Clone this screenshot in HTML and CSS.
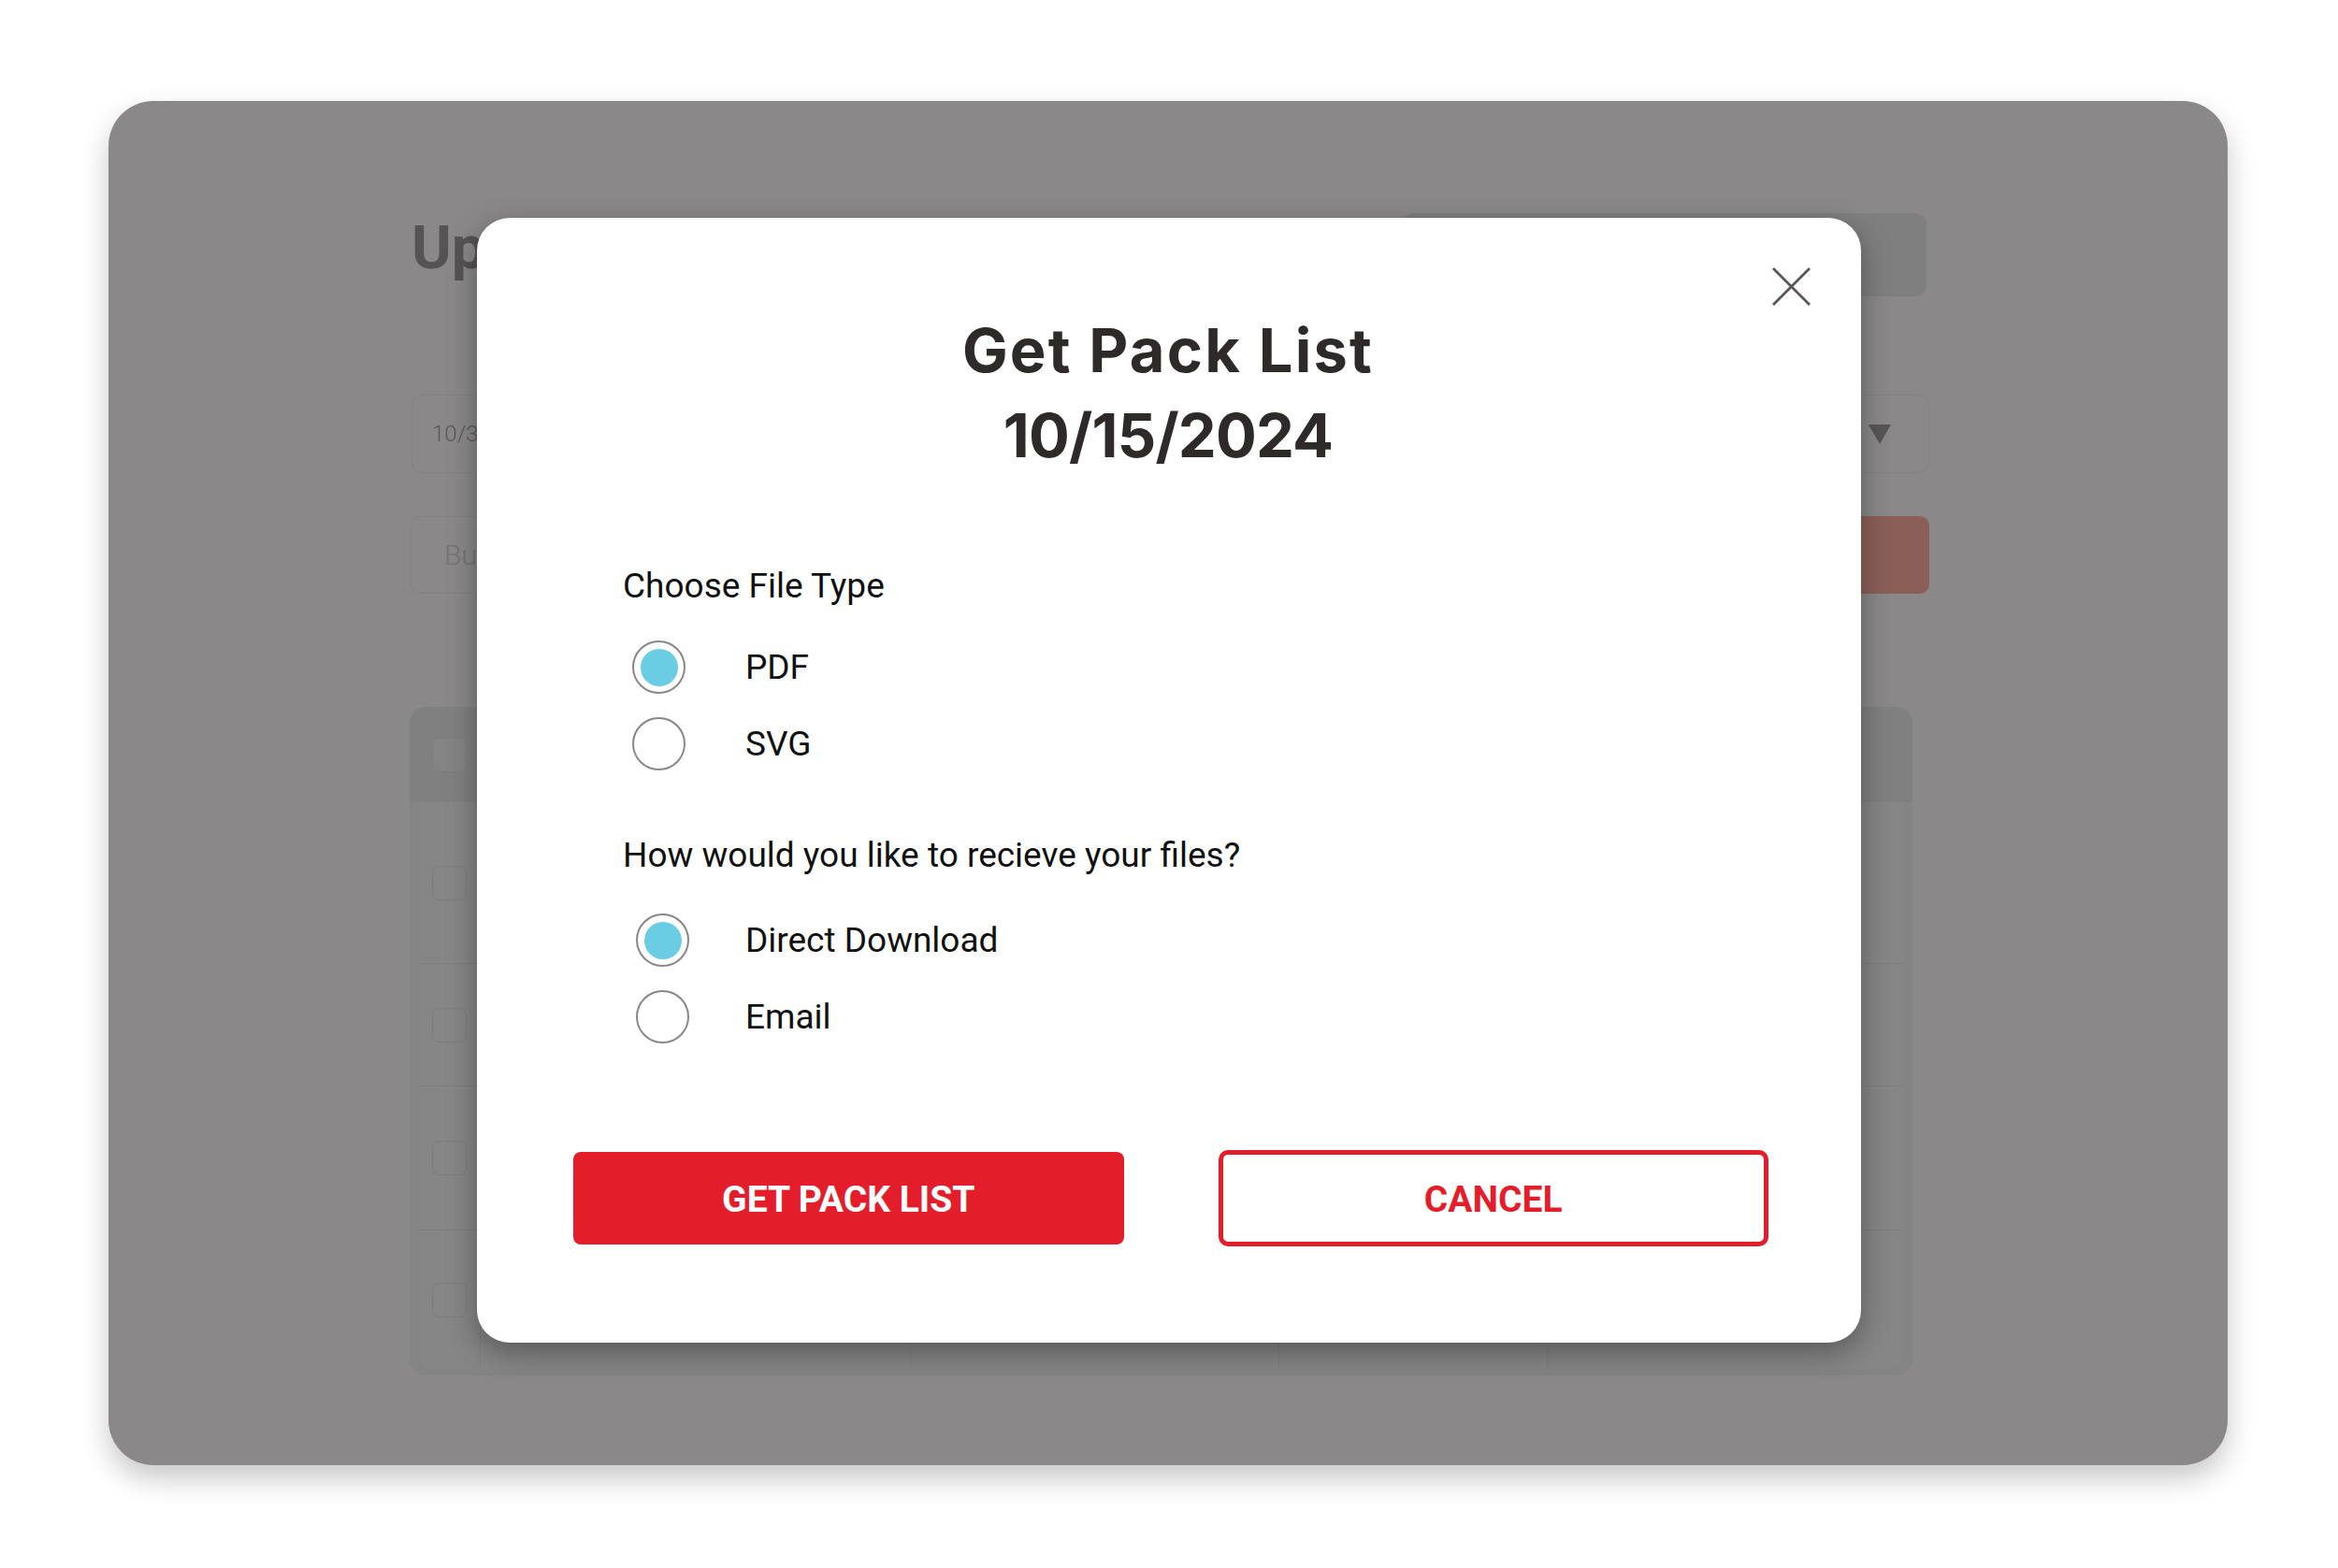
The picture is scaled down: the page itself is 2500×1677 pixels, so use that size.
FILE: index.html
```html
<!DOCTYPE html>
<html lang="en">
<head>
    <meta charset="UTF-8">
    <meta name="viewport" content="width=device-width, initial-scale=1.0">
    <title>Get Pack List</title>
    <link rel="stylesheet" href="styles.css">
</head>
<body>
    <div class="screen">
        <div class="page">
            <div class="page-header">
                <h1 class="page-title">Upcoming Pack Lists</h1>
                <div class="header-btn"></div>
            </div>

            <div class="select">
                <span>10/31/2024</span>
                <span class="caret"></span>
            </div>

            <div class="filter-row">
                <div class="search">Business Unit</div>
                <div class="search-btn"></div>
            </div>

            <div class="table">
                <div class="table-head">
                    <span class="checkbox"></span>
                </div>
                <div class="table-body">
                    <div class="row r1">
                        <div class="cell c-check"><span class="checkbox"></span></div>
                        <div class="cell c-a"></div>
                        <div class="cell c-b"></div>
                        <div class="cell c-c"></div>
                        <div class="cell c-d"></div>
                    </div>
                    <div class="row r2">
                        <div class="cell c-check"><span class="checkbox"></span></div>
                        <div class="cell c-a"></div>
                        <div class="cell c-b"></div>
                        <div class="cell c-c"></div>
                        <div class="cell c-d"></div>
                    </div>
                    <div class="row r3">
                        <div class="cell c-check"><span class="checkbox"></span></div>
                        <div class="cell c-a"></div>
                        <div class="cell c-b"></div>
                        <div class="cell c-c"></div>
                        <div class="cell c-d"></div>
                    </div>
                    <div class="row r4">
                        <div class="cell c-check"><span class="checkbox"></span></div>
                        <div class="cell c-a"></div>
                        <div class="cell c-b"></div>
                        <div class="cell c-c"></div>
                        <div class="cell c-d"></div>
                    </div>
                </div>
            </div>

            <!-- modal -->
            <div class="modal">
                <button class="close" aria-label="Close">
                    <svg width="41" height="41" viewBox="0 0 41 41">
                        <path d="M1 1 L40 40 M40 1 L1 40" stroke="#5b5555" stroke-width="2.8" fill="none"/>
                    </svg>
                </button>

                <h2 class="modal-title">
                    <span class="title-name">Get Pack List</span>
                    <span class="title-date">10/15/2024</span>
                </h2>

                <div class="section">
                    <div class="section-label">Choose File Type</div>
                    <div class="options">
                        <label class="option"><span class="radio checked"></span>PDF</label>
                        <label class="option"><span class="radio"></span>SVG</label>
                    </div>
                </div>

                <div class="section second">
                    <div class="section-label">How would you like to recieve your files?</div>
                    <div class="options shifted">
                        <label class="option"><span class="radio checked"></span>Direct Download</label>
                        <label class="option"><span class="radio"></span>Email</label>
                    </div>
                </div>

                <div class="actions">
                    <button class="btn primary">GET PACK LIST</button>
                    <button class="btn outline">CANCEL</button>
                </div>
            </div>
        </div>
    </div>
</body>
</html>
```

FILE: styles.css
```css
body {
    margin: 0;
    background-color: #fff;
    font-family: Roboto, "Liberation Sans", sans-serif;
}

.screen {
    padding: 108px 118px 110px 116px;
}

/* dimmed page behind the modal */
.page {
    position: relative;
    height: 1340px;
    background-color: #8a8888;
    border-radius: 48px;
    padding: 119px 319px 0 324px;
    box-shadow: 0 14px 30px rgba(0, 0, 0, 0.22);
}

.page-header {
    display: flex;
    justify-content: space-between;
    align-items: flex-start;
}

.page-title {
    margin: 0;
    font-size: 65px;
    line-height: 76px;
    font-weight: 700;
    color: #555353;
}

.header-btn {
    width: 561px;
    height: 89px;
    margin-top: 1px;
    margin-right: 3px;
    background-color: #807f7f;
    border-radius: 12px;
}

.select {
    margin-top: 105px;
    height: 82px;
    border: 1px solid #848282;
    border-radius: 12px;
    display: flex;
    align-items: center;
    justify-content: space-between;
    padding: 0 40px 0 21px;
    font-size: 24px;
    color: #5a5858;
    font-weight: 300;
}

.caret {
    width: 0;
    height: 0;
    border-left: 12px solid transparent;
    border-right: 12px solid transparent;
    border-top: 21px solid #575555;
}

.filter-row {
    margin-top: 46px;
    display: flex;
    gap: 24px;
    height: 83px;
}

.search {
    flex: 1;
    margin-left: -2px;
    border: 1px solid #848282;
    border-radius: 12px;
    display: flex;
    align-items: center;
    padding-left: 36px;
    font-size: 30px;
    font-weight: 300;
    color: #767474;
}

.search-btn {
    width: 380px;
    background-color: #8b5f58;
    border-radius: 10px;
}

.table {
    margin: 121px 18px 0 -2px;
    height: 715px;
    background-color: #858484;
    border-radius: 18px;
    overflow: hidden;
}

.table-head {
    height: 102px;
    background-color: #818080;
    display: flex;
    align-items: center;
    padding-left: 24px;
}

.table-body {
    margin: 0 10px 0 9px;
    background-color: #878686;
    border-radius: 0 0 14px 14px;
}

.row {
    display: grid;
    grid-template-columns: 66px 460px 394px 287px 1fr;
    border-bottom: 1px solid #7f7e7e;
}

.r1 { height: 172px; }
.r2 { height: 130px; }
.r3 { height: 153px; }
.r4 { height: 148px; border-bottom: none; }

.cell {
    display: flex;
    align-items: center;
    border-left: 1px solid #7f7e7e;
}

.c-check {
    border-left: none;
    padding-left: 15px;
}

.checkbox {
    width: 35px;
    height: 35px;
    border: 1px solid #7e7d7d;
    border-radius: 7px;
    background-color: #878686;
}

.table-head .checkbox {
    background-color: #858484;
}

/* modal */
.modal {
    position: absolute;
    left: 394px;
    top: 125px;
    width: 1480px;
    box-sizing: border-box;
    background-color: #fff;
    border-radius: 35px;
    padding: 96px 99px 103px 103px;
    box-shadow: 0 10px 32px rgba(0, 0, 0, 0.35);
}

.close {
    position: absolute;
    top: 53px;
    right: 54px;
    padding: 0;
    border: none;
    background: none;
    width: 41px;
    height: 41px;
    cursor: pointer;
}

.close svg {
    display: block;
}

.modal-title {
    margin: 0;
    text-align: center;
    font-family: Inter, "Open Sans", sans-serif;
    font-size: 65px;
    line-height: 91px;
    font-weight: 700;
    color: #2e2a2a;
    padding-right: 6px;
}

.title-name,
.title-date {
    display: block;
}

.title-name {
    letter-spacing: 2.2px;
}

.title-date {
    letter-spacing: -0.8px;
}

.section {
    margin-top: 95px;
    padding-left: 53px;
}

.section.second {
    margin-top: 70px;
}

.section-label {
    font-size: 37px;
    line-height: 42px;
    color: #111;
}

.options {
    margin-top: 37px;
    display: flex;
    flex-direction: column;
    gap: 25px;
    padding-left: 10px;
}

.options.shifted {
    margin-top: 41px;
    padding-left: 14px;
}

.option {
    display: flex;
    align-items: center;
    font-size: 37px;
    line-height: 42px;
    color: #111;
    cursor: pointer;
}

.radio {
    width: 53px;
    height: 53px;
    border: 2px solid #8c8787;
    border-radius: 50%;
    margin-right: 64px;
    display: flex;
    align-items: center;
    justify-content: center;
    flex-shrink: 0;
}

.options.shifted .radio {
    margin-right: 60px;
}

.radio.checked::after {
    content: "";
    width: 40px;
    height: 40px;
    border-radius: 50%;
    background-color: #6bcde4;
}

.actions {
    margin-top: 114px;
    display: grid;
    grid-template-columns: 1fr 1fr;
    gap: 101px;
    align-items: center;
}

.btn {
    font-family: Roboto, "Liberation Sans", sans-serif;
    font-size: 39px;
    font-weight: 700;
    border-radius: 8px;
    cursor: pointer;
}

.primary {
    height: 99px;
    background-color: #e31e2a;
    color: #fff;
    border: none;
    padding-top: 3px;
}

.outline {
    height: 103px;
    background-color: #fff;
    color: #e31e2a;
    border: 5px solid #e31e2a;
    border-radius: 10px;
    padding-top: 3px;
}
```
